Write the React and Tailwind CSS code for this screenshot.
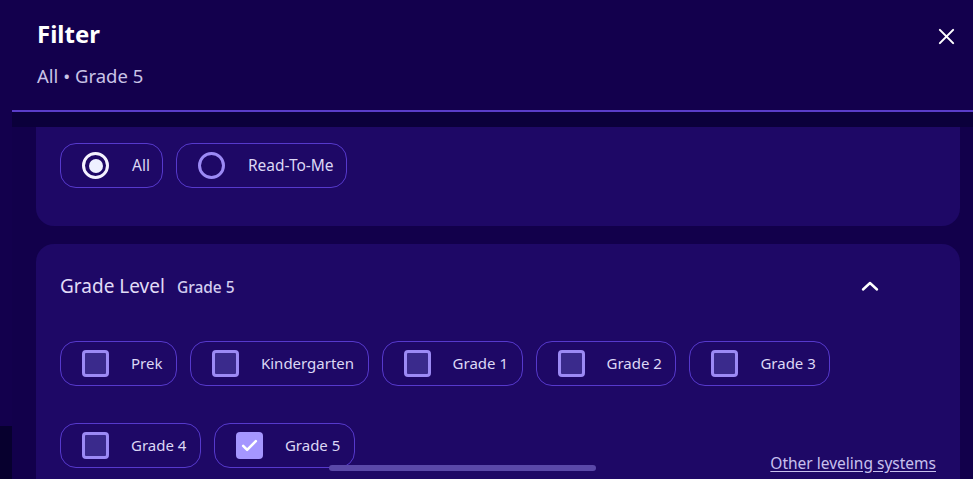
import {useState} from "react";

const grades = ["Prek", "Kindergarten", "Grade 1", "Grade 2", "Grade 3", "Grade 4", "Grade 5"]

function RadioPill({label, checked}) {
    return (
        <div className="flex h-[45px] items-center gap-[23px] rounded-[16px] border-[1.5px] border-[#5639cc] pl-[21px] pr-[12px]">
            {checked ? (
                <span className="flex h-[27px] w-[27px] items-center justify-center rounded-full border-[3px] border-[#f4f2ff]">
                    <span className="h-[14px] w-[14px] rounded-full bg-[#eef0ff]"/>
                </span>
            ) : (
                <span className="h-[27px] w-[27px] rounded-full border-[3px] border-[#9c8af5]"/>
            )}
            <span className="text-[15.5px] text-[#dcd7f5]">{label}</span>
        </div>
    )
}

function CheckPill({label, checked}) {
    return (
        <div className="flex h-[45px] items-center gap-[22px] rounded-[16px] border-[1.5px] border-[#5639cc] pl-[21px] pr-[13.5px]">
            {checked ? (
                <span className="flex h-[27px] w-[27px] items-center justify-center rounded-[4px] bg-[#a596ff]">
                    <svg width="19" height="19" viewBox="0 0 24 24" fill="none" stroke="#ffffff" strokeWidth="3.2"
                         strokeLinecap="round" strokeLinejoin="round">
                        <path d="M4 12.5l5 5L20 6.5"/>
                    </svg>
                </span>
            ) : (
                <span className="h-[27px] w-[27px] rounded-[4px] border-[3px] border-[#9c8af5] bg-[#3a2a8c]"/>
            )}
            <span className="text-[15px] text-[#dcd7f5]">{label}</span>
        </div>
    )
}

export default function App() {
    const [selected] = useState("Grade 5")

    return (
        <div className="relative flex h-[479px] w-[973px] flex-col overflow-hidden bg-[#13004d]"
             style={{fontFamily: '"Noto Sans", "Open Sans", sans-serif'}}>
            <div className="flex h-[110px] shrink-0 justify-between pl-[37px] pr-[18px] pt-[18px]">
                <div>
                    <h1 className="text-[24px] font-bold leading-[32px] text-white">Filter</h1>
                    <p className="mt-[12px] text-[18.5px] text-[#c9c3e6]">All • Grade 5</p>
                </div>
                <button className="mt-[9px] h-[18px] text-white">
                    <svg width="17" height="17" viewBox="0 0 18 18" fill="none" stroke="currentColor" strokeWidth="2.2"
                         strokeLinecap="round">
                        <path d="M2 2l14 14M16 2L2 16"/>
                    </svg>
                </button>
            </div>

            <div className="flex flex-1">
                <div className="flex w-[12px] shrink-0 flex-col">
                    <div className="h-[316px]"/>
                    <div className="flex-1 bg-[#07002e]"/>
                </div>
                <div className="flex flex-1 flex-col">
                    <div className="h-[2px] bg-[#5a3dc9]"/>
                    <div className="flex flex-1 flex-col bg-[#12004b] pl-[24px] pr-[13px]">
                        <div className="-mx-[24px] -mr-[13px] h-[15px] bg-[#0b003b]"/>

                        <div className="rounded-b-[18px] bg-[#1e0866] px-[24px] pb-[38px] pt-[16px]">
                            <div className="flex gap-[13px]">
                                <RadioPill label="All" checked/>
                                <RadioPill label="Read-To-Me"/>
                            </div>
                        </div>

                        <div className="mt-[18px] flex-1 rounded-t-[18px] bg-[#1e0866] px-[24px] pt-[30px]">
                            <div className="flex h-[24px] items-center justify-between pr-[57px]">
                                <div className="flex items-baseline gap-[12px]">
                                    <span className="text-[19px] text-[#e1dcf7]">Grade Level</span>
                                    <span className="text-[15.5px] font-medium text-[#d3cdf0]">{selected}</span>
                                </div>
                                <svg width="18" height="12" viewBox="0 0 18 12" fill="none" stroke="#ffffff"
                                     strokeWidth="2.4" strokeLinecap="round" strokeLinejoin="round">
                                    <path d="M2 9.5l7-6.5 7 6.5"/>
                                </svg>
                            </div>
                            <div className="mt-[43px] flex flex-wrap gap-x-[13px] gap-y-[37px]">
                                {grades.map((g) => (
                                    <CheckPill key={g} label={g} checked={g === selected}/>
                                ))}
                            </div>
                        </div>
                    </div>
                </div>
            </div>

            <a className="absolute bottom-[4px] right-[37px] text-[15.5px] text-[#c8c0ee] underline underline-offset-2">
                Other leveling systems
            </a>
            <div className="absolute bottom-[8px] left-[329px] h-[6px] w-[267px] rounded-full bg-[#5a48a8]"/>
        </div>
    )
}
